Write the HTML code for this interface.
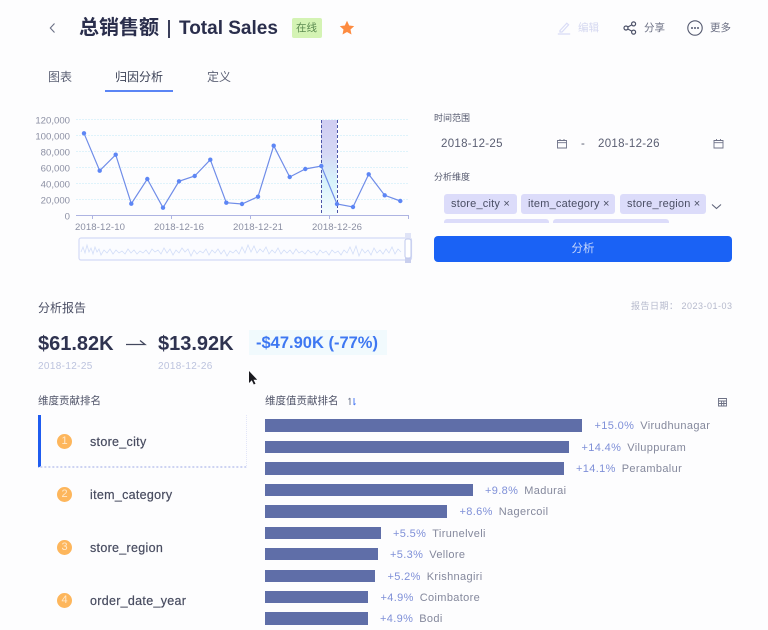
<!DOCTYPE html>
<html lang="zh"><head><meta charset="utf-8"><style>
html,body{margin:0;padding:0}
body{width:768px;height:630px;overflow:hidden;background:#fdfdfe;position:relative;font-family:"Liberation Sans","Noto Sans CJK SC",sans-serif;color:#3c4257}
.t{position:absolute;white-space:nowrap;line-height:1}
.b{position:absolute;left:265px;height:12.300px;background:#5f6ea8}
.l{font-size:11px;letter-spacing:.35px;margin-top:1px}
.p{color:#7f90d8}.n{color:#84889c;margin-left:6px}
.tag{position:absolute;top:194px;height:20px;background:#dcdcfa;border-radius:3px;font-size:11px;letter-spacing:.2px;line-height:20px;color:#4a4e64;padding-left:7px;box-sizing:border-box;white-space:nowrap}
.c{position:absolute;left:57px;width:15px;height:15px;border-radius:50%;background:#fdb65c;color:#ffe9cc;font-size:11px;line-height:15px;text-align:center}
.r{left:90px;font-size:12.500px;color:#484c60;letter-spacing:.3px;-webkit-text-stroke:.2px #484c60}
svg{position:absolute;overflow:visible}
</style></head><body>
<svg style="left:48px;top:22px" width="10" height="12" viewBox="0 0 10 12"><path d="M6.500 1.500 2.300 6l4.200 4.500" fill="none" stroke="#6a6f84" stroke-width="1.100"/></svg>
<div class="t" style="left:79px;top:18px;font-size:20px;font-weight:700;color:#2a2e4c">总销售额</div>
<div style="position:absolute;left:168px;top:20px;width:1.500px;height:18px;background:#3a3e5a"></div>
<div class="t" style="left:179px;top:19px;font-size:19px;font-weight:700;color:#2a2e4c">Total Sales</div>
<div style="position:absolute;left:291.500px;top:18px;width:30px;height:20px;background:#d4f3b4;border-radius:2px;color:#5b8a50;font-size:10.500px;line-height:20px;text-align:center">在线</div>
<svg style="left:339px;top:20px" width="16" height="16" viewBox="0 0 16 16"><path d="M8 .8l2.200 4.700 5 .6-3.700 3.400 1 5L8 12l-4.500 2.500 1-5L.8 6.100l5-.6z" fill="#fd8b40"/></svg>

<svg style="left:557px;top:21px" width="14" height="14" viewBox="0 0 14 14"><path d="M3 9.500 9.800 2.200l1.800 1.600L5 11H3zM.8 13h12.400" fill="none" stroke="#d9dcf6" stroke-width="1.200"/></svg>
<div class="t" style="left:578px;top:23px;font-size:10.500px;color:#d4d7f0">编辑</div>
<svg style="left:623px;top:21px" width="14" height="14" viewBox="0 0 14 14" fill="none" stroke="#4a4f66" stroke-width="1.200"><circle cx="10.600" cy="2.900" r="2"/><circle cx="3" cy="7" r="2"/><circle cx="10.600" cy="11.100" r="2"/><path d="M4.800 6 8.800 3.900M4.800 8l4 2.100"/></svg>
<div class="t" style="left:644px;top:23px;font-size:10.500px;color:#6c7084">分享</div>
<svg style="left:687px;top:20px" width="16" height="16" viewBox="0 0 16 16"><circle cx="8" cy="8" r="7.200" fill="none" stroke="#53586e" stroke-width="1.100"/><circle cx="5" cy="8" r="1" fill="#53586e"/><circle cx="8" cy="8" r="1" fill="#53586e"/><circle cx="11" cy="8" r="1" fill="#53586e"/></svg>
<div class="t" style="left:710px;top:23px;font-size:10.500px;color:#6c7084">更多</div>

<div class="t" style="left:48px;top:71px;font-size:12px;color:#5d6276">图表</div>
<div class="t" style="left:115px;top:71px;font-size:12px;color:#3c4257">归因分析</div>
<div class="t" style="left:207px;top:71px;font-size:12px;color:#5d6276">定义</div>
<div style="position:absolute;left:105px;top:90px;width:68px;height:2px;background:#5b85f5"></div>

<svg style="left:0;top:0" width="768" height="630" viewBox="0 0 768 630" font-family="Liberation Sans" font-size="10" fill="#8b8fa3">
<defs><linearGradient id="g" x1="0" y1="0" x2="0" y2="1"><stop offset="0" stop-color="#d0cdf2"/><stop offset=".35" stop-color="#d5d8f5"/><stop offset=".65" stop-color="#d8f4fb"/><stop offset="1" stop-color="#f6fcfe"/></linearGradient></defs>
<g stroke="#dff3fb" stroke-width="1"><path d="M76 119.500H408M76 135.500H408M76 151.500H408M76 167.500H408M76 183.500H408M76 199.500H408" stroke-dasharray="2 1"/></g>
<path d="M321 120h16v95h-16z" fill="url(#g)"/>
<path d="M321.500 120v95M337.500 120v95" stroke="#4b55a8" stroke-dasharray="3 2" fill="none"/>
<path d="M76 215.500H408M92.500 215v4M171.500 215v4M250.500 215v4M329.500 215v4M408.500 215v4" stroke="#aeb4e2" fill="none"/>
<g text-anchor="end" font-size="9.600"><text x="70" y="123.500">120,000</text><text x="70" y="139.500">100,000</text><text x="70" y="155.500">80,000</text><text x="70" y="171.500">60,000</text><text x="70" y="187.500">40,000</text><text x="70" y="203.500">20,000</text><text x="70" y="219.500">0</text></g>
<g font-size="9.600" letter-spacing=".1"><text x="75" y="230">2018-12-10</text><text x="154" y="230">2018-12-16</text><text x="233" y="230">2018-12-21</text><text x="312" y="230">2018-12-26</text></g>
<path d="M84 133.300 99.700 170.700 115.700 154.700 131.300 203.700 147.300 179 163 207.700 179 181.300 194.700 176 210.300 159.700 226.300 202.700 242 204 258 196.700 273.700 145.700 289.700 177 305.300 169 321.300 166 337 204 353 207 368.700 174.300 384.700 195.300 400.300 201" fill="none" stroke="#6f8ce8" stroke-width="1.200"/>
<g fill="#5d86f5"><circle cx="84" cy="133.300" r="2.200"/><circle cx="99.700" cy="170.700" r="2.200"/><circle cx="115.700" cy="154.700" r="2.200"/><circle cx="131.300" cy="203.700" r="2.200"/><circle cx="147.300" cy="179" r="2.200"/><circle cx="163" cy="207.700" r="2.200"/><circle cx="179" cy="181.300" r="2.200"/><circle cx="194.700" cy="176" r="2.200"/><circle cx="210.300" cy="159.700" r="2.200"/><circle cx="226.300" cy="202.700" r="2.200"/><circle cx="242" cy="204" r="2.200"/><circle cx="258" cy="196.700" r="2.200"/><circle cx="273.700" cy="145.700" r="2.200"/><circle cx="289.700" cy="177" r="2.200"/><circle cx="305.300" cy="169" r="2.200"/><circle cx="321.300" cy="166" r="2.200"/><circle cx="337" cy="204" r="2.200"/><circle cx="353" cy="207" r="2.200"/><circle cx="368.700" cy="174.300" r="2.200"/><circle cx="384.700" cy="195.300" r="2.200"/><circle cx="400.300" cy="201" r="2.200"/></g>
<rect x="79" y="238" width="332.500" height="22" rx="2" fill="#fbfcff" stroke="#d4daf6" stroke-width="1.200"/>
<path d="M81 252 83 247 85 253 87 245 89 252 91 248 93 254 95 247 97 252 99 249 101 255 104 250 107 253 110 249 113 254 116 250 119 253 122 251 125 254 128 249 131 253 134 250 137 254 140 251 143 253 146 250 149 254 152 249 155 252 158 250 161 254 164 248 167 253 170 249 173 255 176 250 179 253 182 248 185 252 188 249 191 256 194 250 197 254 200 251 203 253 206 249 209 255 212 250 215 253 218 249 221 254 224 250 227 256 230 251 233 253 236 250 239 254 242 247 245 253 248 245 251 252 254 246 257 253 260 249 263 252 266 247 269 254 272 250 275 253 278 248 281 254 284 250 287 253 290 250 293 254 296 249 299 253 302 251 305 254 308 250 311 253 314 251 317 255 320 250 323 253 326 251 329 255 332 250 335 253 338 251 341 255 344 250 347 253 350 247 353 254 356 246 359 256 362 249 365 253 368 250 371 255 374 248 377 253 380 250 383 254 386 249 389 253 392 247 395 254 398 249 401 252" fill="none" stroke="#d3def8" stroke-width=".8"/>
<rect x="405" y="233" width="6" height="6" fill="#e0e4f7"/><rect x="405" y="258" width="6" height="5" fill="#c9cfee"/>
<rect x="405" y="239" width="6" height="19" rx="2" fill="#fff" stroke="#bfc8ec"/>
<path d="M557.500 140.500h9v7.500h-9zM557.500 142.700h9M560 139v2M564 139v2" fill="none" stroke="#6e7288" stroke-width=".9"/>
<path d="M714 140.500h9v7.500h-9zM714 142.700h9M716.500 139v2M720.500 139v2" fill="none" stroke="#6e7288" stroke-width=".9"/>
<path d="M712 204.500l4.500 4 4.500-4" fill="none" stroke="#5f647a" stroke-width="1.100"/>
<path d="M126 344.500H145L140 340.500" fill="none" stroke="#43485e" stroke-width="1.300"/>
<path d="M249 371v12l2.800-2.700 2 4.200 1.700-.8-2-4h3.700z" fill="#1a1a1f"/>
<path d="M718.500 398.500h8v7.500h-8zM718.500 401h8M718.500 403.500h8M721.500 401v5M723.800 401v5" fill="none" stroke="#6c7084" stroke-width=".9"/>
<path d="M350 398v7M350 398l-1.500 1.500" fill="none" stroke="#7a8296" stroke-width="1"/><path d="M354 398v7M354 405l1.500-1.500" fill="none" stroke="#4d7df5" stroke-width="1"/>
</svg>

<div class="t" style="left:434px;top:114px;font-size:9px;color:#55596e">时间范围</div>
<div class="t" style="left:441px;top:139px;font-size:11.500px;letter-spacing:.3px;color:#5a5e72">2018-12-25</div>
<div class="t" style="left:581px;top:139px;font-size:11.500px;color:#5a5e72">-</div>
<div class="t" style="left:598px;top:139px;font-size:11.500px;letter-spacing:.3px;color:#5a5e72">2018-12-26</div>
<div class="t" style="left:434px;top:173px;font-size:9px;color:#55596e">分析维度</div>
<div class="tag" style="left:444px;width:73px">store_city ×</div>
<div class="tag" style="left:521px;width:94px">item_category ×</div>
<div class="tag" style="left:620px;width:86px">store_region ×</div>
<div style="position:absolute;left:444px;top:219px;width:105px;height:4px;background:#dcdcfa;border-radius:3px 3px 0 0"></div>
<div style="position:absolute;left:553px;top:219px;width:116px;height:4px;background:#dcdcfa;border-radius:3px 3px 0 0"></div>
<div style="position:absolute;left:434px;top:236px;width:298px;height:26px;background:#1a62f5;border-radius:4px;color:#c5d6fb;font-size:11.500px;line-height:26px;text-align:center">分析</div>

<div class="t" style="left:38px;top:302px;font-size:12px;color:#4a4e64">分析报告</div>
<div class="t" style="left:631px;top:302px;font-size:9px;letter-spacing:.5px;color:#b5b9cc">报告日期： 2023-01-03</div>
<div class="t" style="left:38px;top:334px;font-size:20px;font-weight:700;color:#2f3350">$61.82K</div>
<div class="t" style="left:158px;top:334px;font-size:20px;font-weight:700;color:#2f3350">$13.92K</div>
<div style="position:absolute;left:249px;top:330px;width:138px;height:25px;background:#f1fafd"></div>
<div class="t" style="left:256px;top:335px;font-size:16.500px;font-weight:700;color:#3e78f2">-$47.90K (-77%)</div>
<div class="t" style="left:38px;top:362px;font-size:10px;color:#bcc3de;letter-spacing:.35px">2018-12-25</div>
<div class="t" style="left:158px;top:362px;font-size:10px;color:#bcc3de;letter-spacing:.35px">2018-12-26</div>
<div class="t" style="left:38px;top:396px;font-size:10.500px;color:#4f5368">维度贡献排名</div>
<div class="t" style="left:265px;top:396px;font-size:10.500px;color:#4f5368">维度值贡献排名</div>

<div style="position:absolute;left:38px;top:415px;width:209px;height:53px;box-sizing:border-box;border-left:3px solid #1f5cf0;border-right:1px dotted #e2e5f8;border-bottom:2px dotted #cdd3f2;border-radius:0 0 2px 2px"></div>
<div class="c" style="top:434px">1</div><div class="t r" style="top:436px">store_city</div>
<div class="c" style="top:487px">2</div><div class="t r" style="top:489px">item_category</div>
<div class="c" style="top:540px">3</div><div class="t r" style="top:542px">store_region</div>
<div class="c" style="top:593px">4</div><div class="t r" style="top:595px">order_date_year</div>

<div class="b" style="top:419.300px;width:317px"></div><div class="t l" style="left:594.500px;top:420px"><span class="p">+15.0%</span><span class="n">Virudhunagar</span></div>
<div class="b" style="top:441px;width:304px"></div><div class="t l" style="left:581.500px;top:442px"><span class="p">+14.4%</span><span class="n">Viluppuram</span></div>
<div class="b" style="top:462.300px;width:299px"></div><div class="t l" style="left:576px;top:463px"><span class="p">+14.1%</span><span class="n">Perambalur</span></div>
<div class="b" style="top:484px;width:208px"></div><div class="t l" style="left:485px;top:485px"><span class="p">+9.8%</span><span class="n">Madurai</span></div>
<div class="b" style="top:505.300px;width:182px"></div><div class="t l" style="left:459.500px;top:506px"><span class="p">+8.6%</span><span class="n">Nagercoil</span></div>
<div class="b" style="top:526.700px;width:116px"></div><div class="t l" style="left:393px;top:528px"><span class="p">+5.5%</span><span class="n">Tirunelveli</span></div>
<div class="b" style="top:548px;width:113px"></div><div class="t l" style="left:390px;top:549px"><span class="p">+5.3%</span><span class="n">Vellore</span></div>
<div class="b" style="top:569.700px;width:110px"></div><div class="t l" style="left:387.500px;top:570.500px"><span class="p">+5.2%</span><span class="n">Krishnagiri</span></div>
<div class="b" style="top:591px;width:103px"></div><div class="t l" style="left:380.500px;top:592px"><span class="p">+4.9%</span><span class="n">Coimbatore</span></div>
<div class="b" style="top:612.300px;width:102.700px"></div><div class="t l" style="left:380px;top:613px"><span class="p">+4.9%</span><span class="n">Bodi</span></div>
</body></html>
